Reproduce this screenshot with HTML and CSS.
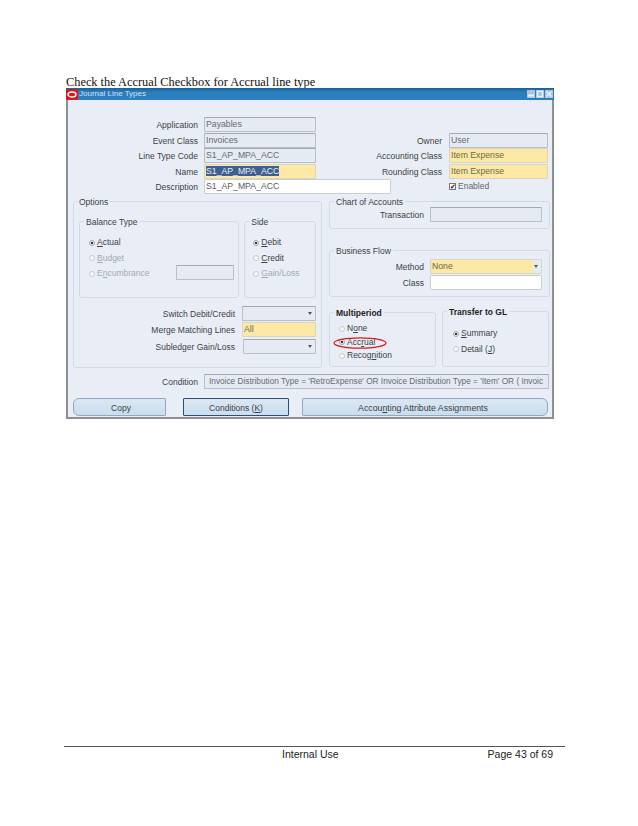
FILE: index.html
```html
<!DOCTYPE html>
<html lang="en">
<head>
<meta charset="utf-8">
<title>Journal Line Types</title>
<link rel="stylesheet" href="styles.css">
</head>
<body>
<main class="page">
  <h1 class="heading">Check the Accrual Checkbox for Accrual line type</h1>
  <section class="window">
    <header class="titlebar">
      <svg class="logo" viewBox="0 0 14 12" aria-hidden="true"><rect width="14" height="12" rx="1" fill="#d8141c"/><ellipse cx="7" cy="6" rx="4.6" ry="2.9" fill="none" stroke="#fff" stroke-width="1.7"/></svg>
      <span class="title">Journal Line Types</span>
      <span class="winbtns">
        <svg viewBox="0 0 8 8" aria-hidden="true"><rect width="8" height="8" fill="#a9c6de"/><rect x="1" y="4.5" width="6" height="2" fill="#eef4f9"/></svg>
        <svg viewBox="0 0 8 8" aria-hidden="true"><rect width="8" height="8" fill="#a9c6de"/><rect x="1.5" y="1.5" width="5" height="5" fill="none" stroke="#eef4f9" stroke-width="1.2"/></svg>
        <svg viewBox="0 0 8 8" aria-hidden="true"><rect width="8" height="8" fill="#a9c6de"/><path d="M1.5 1.5l5 5M6.500 1.500l-5 5" stroke="#eef4f9" stroke-width="1.3"/></svg>
      </span>
    </header>
    <div class="content">
      <div class="top-form">
        <label class="lbl">Application</label><div class="fld ro">Payables</div>
        <label class="lbl lbl-r r2">Owner</label><div class="fld ro f-r r2">User</div>
        <label class="lbl">Event Class</label><div class="fld ro">Invoices</div>
        <label class="lbl lbl-r r3">Accounting Class</label><div class="fld req f-r r3">Item Expense</div>
        <label class="lbl">Line Type Code</label><div class="fld ro">S1_AP_MPA_ACC</div>
        <label class="lbl lbl-r r4">Rounding Class</label><div class="fld req f-r r4">Item Expense</div>
        <label class="lbl">Name</label><div class="fld req"><mark class="sel">S1_AP_MPA_ACC</mark></div>
        <label class="lbl">Description</label><div class="fld white wide">S1_AP_MPA_ACC</div>
        <div class="check f-r r5"><span class="box">✔</span>Enabled</div>
      </div>

      <div class="main">
        <div class="group options">
          <span class="legend legend-opt">Options</span>
          <div class="sub-row">
            <div class="group balance">
              <span class="legend">Balance Type</span>
              <div class="radio on"><i></i><span><u>A</u>ctual</span></div>
              <div class="radio dim"><i></i><span><u>B</u>udget</span></div>
              <div class="radio dim enc"><i></i><span>E<u>n</u>cumbrance</span><div class="fld ro enc-fld"></div></div>
            </div>
            <div class="group side">
              <span class="legend">Side</span>
              <div class="radio on"><i></i><span><u>D</u>ebit</span></div>
              <div class="radio"><i></i><span><u>C</u>redit</span></div>
              <div class="radio dim"><i></i><span><u>G</u>ain/Loss</span></div>
            </div>
          </div>
          <div class="opt-form">
            <label class="lbl">Switch Debit/Credit</label><div class="fld ro drop"></div>
            <label class="lbl">Merge Matching Lines</label><div class="fld req">All</div>
            <label class="lbl">Subledger Gain/Loss</label><div class="fld ro drop"></div>
          </div>
        </div>

        <div class="right">
          <div class="group chart">
            <span class="legend">Chart of Accounts</span>
            <div class="pair"><label class="lbl">Transaction</label><div class="fld ro"></div></div>
          </div>
          <div class="group flow">
            <span class="legend">Business Flow</span>
            <div class="pair"><label class="lbl">Method</label><div class="fld req drop">None</div></div>
            <div class="pair"><label class="lbl">Class</label><div class="fld white"></div></div>
          </div>
          <div class="bottom-row">
            <div class="group multi">
              <span class="legend strong">Multiperiod</span>
              <div class="radio"><i></i><span>N<u>o</u>ne</span></div>
              <div class="radio on"><i></i><span>Acc<u>r</u>ual</span>
                <svg class="ring" viewBox="0 0 54 12" preserveAspectRatio="none" aria-hidden="true"><ellipse cx="27" cy="6" rx="26" ry="5.200" fill="none" stroke="#e0141c" stroke-width="1.200"/></svg>
              </div>
              <div class="radio"><i></i><span>Recog<u>n</u>ition</span></div>
            </div>
            <div class="group transfer">
              <span class="legend strong">Transfer to GL</span>
              <div class="radio on"><i></i><span><u>S</u>ummary</span></div>
              <div class="radio"><i></i><span>Detail (<u>J</u>)</span></div>
            </div>
          </div>
        </div>
      </div>

      <div class="condition">
        <label class="lbl">Condition</label>
        <div class="fld ro cond-fld">Invoice Distribution Type = 'RetroExpense' OR Invoice Distribution Type = 'Item' OR ( Invoic</div>
      </div>

      <div class="buttons">
        <button class="btn copy" type="button">Copy</button>
        <button class="btn conditions" type="button">Conditions (<u>K</u>)</button>
        <button class="btn attrs" type="button">Accou<u>n</u>ting Attribute Assignments</button>
      </div>
    </div>
  </section>
  <footer class="footer">
    <span class="foot-mid">Internal Use</span>
    <span class="foot-right">Page 43 of 69</span>
  </footer>
</main>
</body>
</html>
```
FILE: styles.css
```css
* { box-sizing: border-box; }
html, body { margin: 0; padding: 0; background: #fff; }
.page { width: 638px; height: 826px; padding: 76px 0 0 66px; display: flex; flex-direction: column; }
.heading { margin: 0; font: 400 12.350px/12px "Liberation Serif", serif; color: #111; height: 12px; white-space: nowrap; }

.window { width: 488px; height: 331px; background: #e9eef6; border: solid #8d9094; border-width: 0 2px 2px 2px; }
.titlebar { height: 12px; margin: 0 -2px; background: linear-gradient(#1f5f92, #2a7fbe 35%, #2a7fbe); display: flex; align-items: center; }
.logo { width: 12px; height: 11px; flex: none; }
.title { font: 8px/12px "Liberation Sans", sans-serif; color: #cfe0ee; margin-left: 1px; }
.winbtns { margin-left: auto; display: flex; gap: 1px; padding-right: 1px; }
.winbtns svg { width: 8px; height: 8px; display: block; }

.content { font: 8.500px/15px "Liberation Sans", sans-serif; color: #3c3f44; }
.lbl { text-align: right; white-space: nowrap; display: block; padding-top: 1px; }
.fld { height: 15px; font-size: 8.700px; line-height: 13px; padding-left: 1px; border: 1px solid #b9bfc8; border-top-color: #a3a9b2; border-radius: 1px; white-space: nowrap; overflow: hidden; position: relative; }
.ro { background: #e6ebf3; color: #656a72; }
.req { background: #fde8a6; color: #6e6a45; border-color: #d6d6c4; }
.req.drop { background: linear-gradient(to left, #e6ebf3 8px, #fde8a6 8px); }
.white { background: #fff; color: #555a62; border-color: #c9ced6; }
.sel { background: #3f5f90; color: #e9eef6; }

.top-form { display: grid; grid-template-columns: 130px 112px 75px 58px 105px; grid-auto-rows: 15.5px; padding-top: 17px; height: 94px; }
.top-form > .lbl:not(.lbl-r) { grid-column: 1; width: 130px; }
.top-form > .fld:not(.f-r) { grid-column: 2; margin-left: 6px; width: 112px; }
.top-form > .fld.wide { grid-column: 2 / 4; width: 187px; }
.top-form > .lbl-r { grid-column: 3 / 5; padding-right: 1px; }
.f-r { grid-column: 5; margin-left: 6px; }
.r2 { grid-row: 2; } .r3 { grid-row: 3; } .r4 { grid-row: 4; } .r5 { grid-row: 5; }
.check { display: flex; align-items: center; gap: 2px; color: #5f646b; }
.box { width: 7px; height: 7px; background: #fff; border: 1px solid #777; font-size: 7px; line-height: 6px; color: #111; text-align: center; overflow: hidden; }

.main { display: flex; margin: 7px 0 0 5px; align-items: flex-start; }
.group { position: relative; border: 1px solid #d3dae6; border-radius: 3px; }
.legend { position: absolute; top: -7px; left: 4px; padding: 0 2px; background: #e9eef6; line-height: 14px; color: #3c3f44; white-space: nowrap; }
.legend-opt { left: 3px; }
.strong { font-weight: 700; color: #222; }

.options { width: 249px; height: 167px; padding: 19px 5px 0 5px; }
.sub-row { display: flex; gap: 5px; }
.balance { width: 161px; height: 77px; padding-top: 13px; padding-left: 9px; }
.side { width: 72px; height: 77px; padding-top: 13px; padding-left: 8px; }
.opt-form { display: grid; grid-template-columns: 156px 74px; column-gap: 7px; grid-auto-rows: 16px; margin-top: 8px; }
.opt-form .lbl:nth-last-child(2) { margin-top: 1px; }
.opt-form .fld:last-child { margin: 1px 0 0 1px; }

.radio { display: flex; align-items: center; gap: 2px; height: 15.5px; position: relative; white-space: nowrap; }
.radio i { width: 6px; height: 6px; border-radius: 50%; background: #f6f8fb; border: 1px solid #c4cad4; flex: none; }
.radio.on i { background: radial-gradient(#333 0 1.300px, #f6f8fb 1.600px); border-color: #a0a6b0; }
.dim { color: #a3a9b2; }
.enc-fld { position: absolute; left: 87px; top: -1px; width: 58px; }
.drop::after { content: ""; position: absolute; right: 3px; top: 5px; border: 2.500px solid transparent; border-top: 3px solid #555; }

.right { width: 221px; margin-left: 7px; }
.chart { height: 28px; padding: 5px 8px 0 0; }
.flow { height: 47px; margin-top: 21px; padding: 8px 8px 0 0; }
.pair { display: grid; grid-template-columns: 94px 112px; column-gap: 6px; height: 15.5px; }
.bottom-row { display: flex; gap: 6px; margin-top: 15px; }
.multi { width: 107px; height: 55px; padding: 9px 0 0 9px; }
.multi .radio { height: 13.500px; }
.transfer { width: 107px; height: 56px; margin-top: -1px; padding: 14px 0 0 10px; }
.ring { position: absolute; left: -6px; top: 1px; width: 54px; height: 12px; }

.condition { display: grid; grid-template-columns: 130px 345px; column-gap: 6px; margin-top: 6px; }
.condition .cond-fld { font-size: 8.280px; padding-left: 4px; }

.buttons { display: flex; margin: 8px 0 0 5px; height: 18px; align-items: stretch; }
.btn { font: 8.500px/14px "Liberation Sans", sans-serif; color: #3c3f44; background: linear-gradient(#dbe7f3, #c9deef); border: 1px solid #93a8bc; border-radius: 6px 1px 1px 6px; padding: 1px 0 0; }
.copy { width: 93px; padding: 2px 0 0 3px; }
.conditions { width: 106px; margin-left: 17px; border: 1px solid #2c4f75; border-radius: 1px; }
.attrs { width: 246px; margin-left: 13px; border-radius: 1px 6px 6px 1px; font-size: 8.750px; padding-right: 4px; }

.footer { position: relative; margin-top: 327px; margin-left: -2px; width: 501px; height: 20px; border-top: 1px solid #555; font: 10.500px/14px "Liberation Sans", sans-serif; color: #222; }
.foot-mid { position: absolute; left: 218px; top: 0; }
.foot-right { position: absolute; right: 12px; top: 0; }
```
